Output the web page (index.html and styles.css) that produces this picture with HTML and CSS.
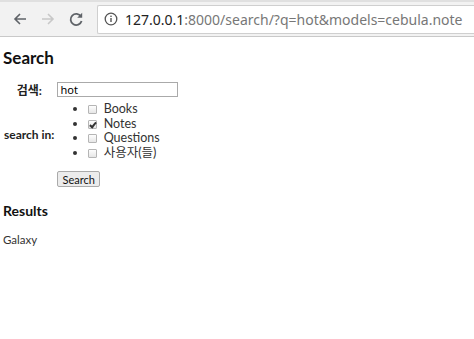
FILE: index.html
```html
<!DOCTYPE html>
<html lang="ko">
<head>
    <meta charset="UTF-8">
    <title>Search</title>
    <link rel="stylesheet" href="styles.css">
</head>
<body>
    <div class="toolbar">
        <div class="nav">
            <svg class="nav-icon" width="16" height="16" viewBox="0 0 16 16"><path d="M14 8H3M8 3L3 8l5 5" fill="none" stroke="#5f6368" stroke-width="1.6"/></svg>
            <svg class="nav-icon" width="16" height="16" viewBox="0 0 16 16"><path d="M2 8h11M8 3l5 5-5 5" fill="none" stroke="#c8c8c8" stroke-width="1.6"/></svg>
            <svg class="nav-icon" width="16" height="16" viewBox="0 0 16 16"><path d="M13 5.5A5.6 5.6 0 1 0 13.6 10" fill="none" stroke="#5f6368" stroke-width="1.8"/><path d="M14.2 1.8v5h-5z" fill="#5f6368"/></svg>
        </div>
        <div class="omnibox">
            <svg class="info" width="14" height="14" viewBox="0 0 14 14"><circle cx="7" cy="7" r="5.8" fill="none" stroke="#555" stroke-width="1.3"/><rect x="6.3" y="6" width="1.4" height="4" fill="#555"/><rect x="6.3" y="3.6" width="1.4" height="1.4" fill="#555"/></svg>
            <span class="host">127.0.0.1</span><span class="rest">:8000/search/?q=hot&amp;models=cebula.note</span>
        </div>
    </div>
    <main>
        <h2>Search</h2>
        <form>
            <table class="form">
                <tr>
                    <th>검색:</th>
                    <td><input type="text" class="query" value="hot"></td>
                </tr>
                <tr>
                    <th>search in:</th>
                    <td>
                        <ul class="models">
                            <li><label><input type="checkbox" class="check"> Books</label></li>
                            <li><label><input type="checkbox" class="check" checked> Notes</label></li>
                            <li><label><input type="checkbox" class="check"> Questions</label></li>
                            <li><label><input type="checkbox" class="check"> 사용자(들)</label></li>
                        </ul>
                    </td>
                </tr>
                <tr>
                    <th></th>
                    <td><button type="button" class="btn">Search</button></td>
                </tr>
            </table>
        </form>
        <h3>Results</h3>
        <p class="result">Galaxy</p>
    </main>
</body>
</html>
```

FILE: styles.css
```css
body {
    margin: 0;
    padding: 0;
    background: white;
    font-family: Lato, "Noto Sans CJK KR", sans-serif;
    font-size: 12px;
    color: #222;
}
.toolbar {
    height: 37px;
    background-color: #f2f2f2;
    border-top: 2px solid #e0e0e0;
    border-bottom: 1px solid #c9c9c9;
    display: flex;
    align-items: center;
    box-sizing: border-box;
}
.nav {
    display: flex;
    align-items: center;
    gap: 12px;
    padding-left: 12px;
    width: 85px;
    flex-shrink: 0;
}
.omnibox {
    flex: 1;
    min-width: 0;
    height: 27px;
    background: white;
    border: 1px solid #cfcfcf;
    border-right: none;
    border-radius: 2px 0 0 2px;
    display: flex;
    align-items: center;
    padding-left: 6px;
    font-family: "Noto Sans", sans-serif;
    font-size: 14px;
    white-space: nowrap;
    overflow: hidden;
}
.info {
    flex-shrink: 0;
    margin-right: 7px;
}
.host {
    color: #222;
}
.rest {
    color: #777;
}
main {
    padding: 0 3px;
}
h2 {
    font-size: 17px;
    margin: 10px 0 13px;
    color: #111;
}
.form {
    border-spacing: 0;
    margin-left: -2px;
}
.form th {
    font-size: 12px;
    padding: 0 3px;
    white-space: nowrap;
}
.form td {
    padding: 1px 0;
}
.query {
    box-sizing: border-box;
    width: 121px;
    height: 15px;
    font-size: 11px;
    font-family: "Noto Sans", sans-serif;
    border: 1px solid #aaa;
    padding: 0 2px;
    margin: 0;
}
.models {
    margin: 3px 0 9px;
    padding-left: 31px;
    font-size: 12.5px;
    color: #333;
}
.models li {
    height: 14.5px;
    line-height: 14.5px;
}
.check {
    appearance: none;
    width: 9px;
    height: 9px;
    margin: 0 3px 0 0;
    vertical-align: -1px;
    border: 1px solid #b5b5b5;
    border-radius: 1px;
    background: linear-gradient(#fdfdfd, #e6e6e6);
    position: relative;
}
.check:checked::after {
    content: "";
    position: absolute;
    left: 2px;
    top: 0;
    width: 2px;
    height: 5px;
    border: solid #333;
    border-width: 0 2px 2px 0;
    transform: rotate(40deg);
}
.btn {
    font-family: inherit;
    font-size: 11px;
    padding: 0 4px;
    height: 16px;
    border: 1px solid #aaa;
    border-radius: 2px;
    background: #ececec;
    color: #111;
}
h3 {
    font-size: 14px;
    margin: 14px 0 14px;
    color: #111;
}
.result {
    margin: 0;
    font-size: 11.5px;
    color: #333;
}
```
